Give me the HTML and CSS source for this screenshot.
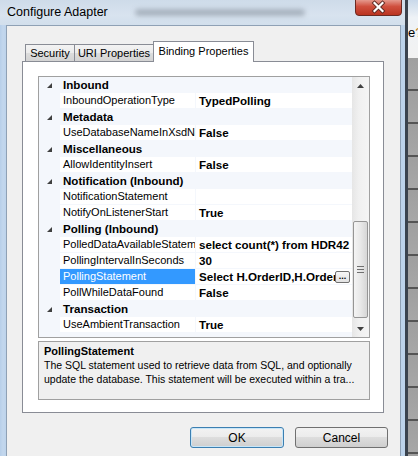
FILE: index.html
```html
<!DOCTYPE html>
<html>
<head>
<meta charset="utf-8">
<link rel="stylesheet" href="styles.css">
</head>
<body>
<div class="screen">
  <div class="window">
    <div class="titlebar">
      <span class="title">Configure Adapter</span>
      <span class="blur"></span>
      <div class="close">
        <svg width="47" height="16" viewBox="0 0 47 16">
          <defs>
            <linearGradient id="cg" x1="0" y1="0" x2="0" y2="1">
              <stop offset="0" stop-color="#e8a59a"/>
              <stop offset="0.45" stop-color="#d0503f"/>
              <stop offset="1" stop-color="#b9321f"/>
            </linearGradient>
          </defs>
          <path d="M0.5 -1 H46.5 V12 Q46.5 15.5 43 15.5 H4 Q0.5 15.5 0.5 12 Z" fill="url(#cg)" stroke="#6b2a22"/>
          <path d="M19.5 3 L27.5 11 M27.5 3 L19.5 11" stroke="#5e2a24" stroke-width="4" stroke-linecap="square"/>
          <path d="M19.5 3 L27.5 11 M27.5 3 L19.5 11" stroke="#ffffff" stroke-width="2.2" stroke-linecap="square"/>
        </svg>
      </div>
    </div>
    <div class="frame">
      <div class="client">
        <div class="tabs">
          <div class="tabstrip">
            <div class="tab t1">Security</div>
            <div class="tab t2">URI Properties</div>
            <div class="tab t3 selected">Binding Properties</div>
          </div>
          <div class="tabpage">
            <div class="pgrid">
              <div class="rows">
                <div class="row cat"><span class="m"><svg width="5" height="5" viewBox="0 0 5 5"><polygon points="5,0 5,5 0,5" fill="#404040"/></svg></span><span class="c">Inbound</span></div>
                <div class="row"><span class="m"></span><span class="n">InboundOperationType</span><span class="v">TypedPolling</span></div>
                <div class="row cat"><span class="m"><svg width="5" height="5" viewBox="0 0 5 5"><polygon points="5,0 5,5 0,5" fill="#404040"/></svg></span><span class="c">Metadata</span></div>
                <div class="row"><span class="m"></span><span class="n">UseDatabaseNameInXsdNamespace</span><span class="v">False</span></div>
                <div class="row cat"><span class="m"><svg width="5" height="5" viewBox="0 0 5 5"><polygon points="5,0 5,5 0,5" fill="#404040"/></svg></span><span class="c">Miscellaneous</span></div>
                <div class="row"><span class="m"></span><span class="n">AllowIdentityInsert</span><span class="v">False</span></div>
                <div class="row cat"><span class="m"><svg width="5" height="5" viewBox="0 0 5 5"><polygon points="5,0 5,5 0,5" fill="#404040"/></svg></span><span class="c">Notification (Inbound)</span></div>
                <div class="row"><span class="m"></span><span class="n">NotificationStatement</span><span class="v"></span></div>
                <div class="row"><span class="m"></span><span class="n">NotifyOnListenerStart</span><span class="v">True</span></div>
                <div class="row cat"><span class="m"><svg width="5" height="5" viewBox="0 0 5 5"><polygon points="5,0 5,5 0,5" fill="#404040"/></svg></span><span class="c">Polling (Inbound)</span></div>
                <div class="row"><span class="m"></span><span class="n">PolledDataAvailableStatement</span><span class="v">select count(*) from HDR42</span></div>
                <div class="row"><span class="m"></span><span class="n">PollingIntervalInSeconds</span><span class="v">30</span></div>
                <div class="row"><span class="m"></span><span class="n sel">PollingStatement</span><span class="v edit"><span class="vt">Select H.OrderID,H.OrderDate</span><span class="dots">...</span></span></div>
                <div class="row"><span class="m"></span><span class="n">PollWhileDataFound</span><span class="v">False</span></div>
                <div class="row cat"><span class="m"><svg width="5" height="5" viewBox="0 0 5 5"><polygon points="5,0 5,5 0,5" fill="#404040"/></svg></span><span class="c">Transaction</span></div>
                <div class="row"><span class="m"></span><span class="n">UseAmbientTransaction</span><span class="v">True</span></div>
              </div>
              <div class="vscroll">
                <div class="sbtn"><svg width="7" height="4" viewBox="0 0 7 4"><polygon points="3.5,0 7,4 0,4" fill="#404040"/></svg></div>
                <div class="track">
                  <div class="thumb">
                    <svg width="7" height="7" viewBox="0 0 7 7"><path d="M0 0.5H7M0 3.5H7M0 6.5H7" stroke="#6f6f6f" stroke-width="1"/></svg>
                  </div>
                </div>
                <div class="sbtn"><svg width="7" height="4" viewBox="0 0 7 4"><polygon points="0,0 7,0 3.5,4" fill="#404040"/></svg></div>
              </div>
            </div>
            <div class="desc">
              <div class="dtitle">PollingStatement</div>
              <div class="dline">The SQL statement used to retrieve data from SQL, and optionally</div>
              <div class="dline">update the database. This statement will be executed within a tra...</div>
            </div>
          </div>
        </div>
        <div class="buttons">
          <button class="btn ok">OK</button>
          <button class="btn cancel">Cancel</button>
        </div>
      </div>
    </div>
  </div>
  <div class="behind">
    <div class="btop"><span class="be">e</span><span class="bq">?</span></div>
    <div class="blist"></div>
  </div>
</div>
</body>
</html>
```

FILE: styles.css
```css
* { box-sizing: border-box; }
html, body { margin: 0; padding: 0; }
body { font-family: "Liberation Sans", Arial, sans-serif; color: #000; }

.screen {
  width: 418px;
  height: 456px;
  display: flex;
  overflow: hidden;
}

.window {
  width: 405px;
  height: 456px;
  display: flex;
  flex-direction: column;
  background: linear-gradient(to right, #b7cfe9 0, #c3d7ed 3px, #bdd3eb 6px, #cfdeee 50%, #bcd3eb 100%);
}

.titlebar {
  height: 25px;
  display: flex;
  align-items: flex-start;
  background: linear-gradient(#cedbe9, #d8e3ef 60%, #d2dfec);
}
.title {
  font-size: 12.5px;
  line-height: 15px;
  margin: 5px 0 0 7px;
  white-space: nowrap;
}
.blur {
  width: 170px;
  height: 7px;
  margin: 9px 0 0 27px;
  background: #97a2ae;
  border-radius: 4px;
  filter: blur(2.5px);
  opacity: 0.75;
}
.close {
  margin-left: auto;
  margin-right: 3px;
  width: 47px;
  height: 16px;
}
.close svg { display: block; }

.frame {
  flex: 1;
  display: flex;
  padding: 0 4px 0 6px;
}
.client {
  flex: 1;
  background: #f0f0f0;
  border: 1px solid #8fa1b5;
  border-bottom: none;
}

.tabs {
  margin: 15px 0 0 15px;
  width: 362px;
}
.tabstrip {
  height: 20px;
  display: flex;
  align-items: flex-end;
  padding-left: 3px;
}
.tab {
  height: 17px;
  border: 1px solid #898c95;
  border-bottom: none;
  margin-right: -1px;
  background: linear-gradient(#f3f3f3, #ebebeb 50%, #dddddd 50%, #d3d3d3);
  font-size: 11px;
  line-height: 17px;
  text-align: center;
  white-space: nowrap;
}
.t1 { width: 50px; }
.t2 { width: 80px; }
.t3 { width: 101px; }
.tab.selected {
  height: 21px;
  margin-bottom: -1px;
  background: #ffffff;
  line-height: 19px;
  position: relative;
  z-index: 1;
}

.tabpage {
  height: 352px;
  border: 1px solid #898c95;
  background: #ffffff;
  padding: 14px 0 0 15px;
}

.pgrid {
  width: 332px;
  height: 262px;
  border: 1px solid #a0a0a0;
  display: flex;
  background: #f4f7fc;
}
.rows {
  width: 313px;
  display: flex;
  flex-direction: column;
}
.row {
  display: grid;
  grid-template-columns: 21px 136px 156px;
  height: 16px;
  font-size: 11px;
  line-height: 15px;
}
.m {
  display: flex;
  align-items: center;
  padding-left: 8px;
  background: #f4f7fc;
}
.m svg { display: block; }
.n {
  background: #ffffff;
  border-right: 1px solid #f4f7fc;
  border-bottom: 1px solid #f4f7fc;
  padding-left: 3px;
  white-space: nowrap;
  overflow: hidden;
}
.n.sel {
  background: #3399ff;
  color: #ffffff;
}
.v {
  background: #ffffff;
  border-bottom: 1px solid #f4f7fc;
  padding-left: 3px;
  font-weight: bold;
  font-size: 11.6px;
  white-space: nowrap;
  overflow: hidden;
}
.v.edit {
  display: flex;
  align-items: flex-start;
  padding-right: 2px;
}
.vt {
  flex: 1;
  overflow: hidden;
  white-space: nowrap;
}
.dots {
  width: 15px;
  height: 12px;
  margin-top: 2px;
  border: 1px solid #707070;
  border-radius: 2px;
  background: linear-gradient(#f6f6f6, #e2e2e2);
  font-size: 9px;
  font-weight: bold;
  line-height: 8px;
  text-align: center;
  flex: none;
}
.cat .c {
  grid-column: 2 / 4;
  padding-left: 3px;
  font-weight: bold;
  font-size: 11.6px;
  white-space: nowrap;
}

.vscroll {
  width: 17px;
  height: 260px;
  display: flex;
  flex-direction: column;
  background: linear-gradient(to right, #e6e6e6, #f0f0f0 40%, #f4f4f4);
}
.sbtn {
  height: 17px;
  display: flex;
  align-items: center;
  justify-content: center;
}
.sbtn svg { display: block; }
.track { flex: 1; padding: 0 1px; }
.thumb {
  margin-top: 127px;
  height: 97px;
  border: 1px solid #959595;
  border-radius: 2px;
  background: linear-gradient(to right, #f4f4f4, #e8e8e8 50%, #d6d6d6);
  display: flex;
  align-items: center;
  justify-content: center;
}
.thumb svg { display: block; }

.desc {
  margin-top: 3px;
  width: 332px;
  height: 59px;
  border: 1px solid #a0a0a0;
  background: #f0f0f0;
  padding: 2px 0 0 5px;
  font-size: 10.5px;
  line-height: 14px;
}
.dtitle { font-weight: bold; font-size: 11px; }
.dline { white-space: nowrap; }

.buttons {
  display: flex;
  justify-content: flex-end;
  gap: 11px;
  margin-top: 14px;
  padding-right: 12px;
}
.btn {
  height: 21px;
  border: 1px solid #707070;
  border-radius: 3px;
  background: linear-gradient(#f2f2f2, #ebebeb 50%, #dddddd 50%, #cfcfcf);
  font-family: "Liberation Sans", Arial, sans-serif;
  font-size: 12px;
  color: #000;
  padding: 0;
}
.ok {
  width: 94px;
  border-color: #3c7fb1;
  box-shadow: inset 0 0 0 1px #c8e6f8;
}
.cancel { width: 93px; }

.behind {
  width: 13px;
  height: 456px;
  display: flex;
  flex-direction: column;
  border-left: 3px solid #3a434e;
}
.btop {
  height: 58px;
  background: linear-gradient(#c9d9ea, #eef2f6 30%, #f2f2f2);
  padding-top: 26px;
  font-size: 13px;
  line-height: 14px;
  white-space: nowrap;
  overflow: hidden;
}
.bq { color: #c08020; }
.blist {
  flex: 1;
  background:
    repeating-linear-gradient(#9f9f9f 0, #a7a7a7 31px, #555 31px, #555 33px);
}
```
